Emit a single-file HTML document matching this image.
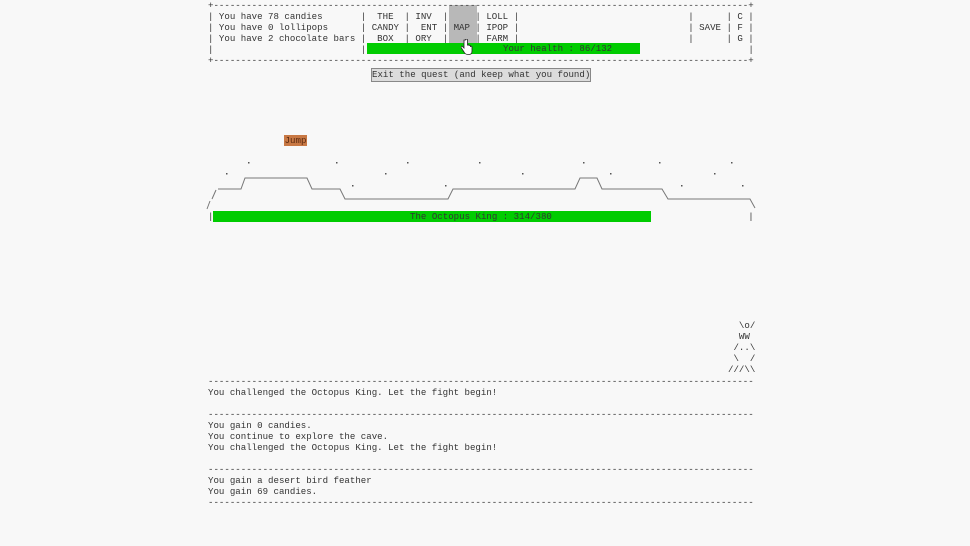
<!DOCTYPE html>
<html><head><meta charset="utf-8"><style>
body{margin:0;background:#f8f8f8;width:970px;height:546px;overflow:hidden;position:relative;color:#333}
.p{position:absolute;margin:0;font-family:"Liberation Mono",monospace;font-size:9.1px;line-height:11px;white-space:pre}
.bar{position:absolute;background:#00cc00;color:#333;font-family:"Liberation Mono",monospace;font-size:9.1px;line-height:11px;white-space:pre;box-sizing:border-box}
</style></head><body>
<div style="position:absolute;left:449px;top:5px;width:28px;height:38px;background:#b8b8b8"></div>
<pre class="p" style="left:208px;top:0">+--------------------------------------------------------------------------------------------------+
| You have 78 candies       |  THE  | INV  |     | LOLL |<span>          </span><span>          </span><span>          </span> |      | C |
| You have 0 lollipops      | CANDY |  ENT | MAP | IPOP |<span>          </span><span>          </span><span>          </span> | SAVE | F |
| You have 2 chocolate bars |  BOX  | ORY  |     | FARM |<span>          </span><span>          </span><span>          </span> |      | G |
|                           |<span>          </span><span>          </span><span>          </span><span>          </span><span>          </span><span>          </span><span>          </span>|
+--------------------------------------------------------------------------------------------------+</pre>
<div class="bar" style="left:367px;top:43px;width:273px;height:11px;padding-left:136px">Your health : 86/132</div>
<svg style="position:absolute;left:461px;top:39px" width="12" height="16" viewBox="0 0 12 16"><path d="M3 1v8l-1.5-1.5c-1-.8-2 .2-1.3 1.2L3 13c1 2 2 2.5 4 2.5h1c2 0 3-1.5 3-3.5V8c0-1-1.5-1-1.5 0V7c0-1-1.5-1-1.5 0V6.5c0-1-1.5-1-1.5 0V1c0-1.2-2-1.2-2 0z" fill="#fff" stroke="#222" stroke-width="0.8"/></svg>
<pre class="p" style="left:371px;top:68px;background:#dcdcdc;border:1px solid #888;line-height:12px">Exit the quest (and keep what you found)</pre>
<pre class="p" style="left:284px;top:135px;width:23px;height:11px;background:#c87844;border:0;color:#5a2a10;text-align:center">Jump</pre>
<svg style="position:absolute;left:0;top:0" width="970" height="546">
<g stroke="#777" stroke-width="1" fill="none">
<polyline points="218,189 241,189 245,178 307,178 312,189 340,189 345,199 448,199 453,189 575,189 580,178 597,178 602,189 662,189 668,199 750,199 755,208"/>
<line x1="216" y1="190" x2="212" y2="199"/>
<line x1="210" y1="201" x2="207" y2="209"/>
</g>
<g fill="#555">
<rect x="248" y="162" width="1.5" height="1.5"/><rect x="336" y="162" width="1.5" height="1.5"/><rect x="407" y="162" width="1.5" height="1.5"/><rect x="479" y="162" width="1.5" height="1.5"/><rect x="583" y="162" width="1.5" height="1.5"/><rect x="659" y="162" width="1.5" height="1.5"/><rect x="731" y="162" width="1.5" height="1.5"/>
<rect x="226" y="173" width="1.5" height="1.5"/><rect x="385" y="173" width="1.5" height="1.5"/><rect x="522" y="173" width="1.5" height="1.5"/><rect x="610" y="173" width="1.5" height="1.5"/><rect x="714" y="173" width="1.5" height="1.5"/>
<rect x="352" y="185" width="1.5" height="1.5"/><rect x="445" y="185" width="1.5" height="1.5"/><rect x="681" y="185" width="1.5" height="1.5"/><rect x="742" y="185" width="1.5" height="1.5"/>
</g>
</svg>
<pre class="p" style="left:208px;top:211px">|                                                                                                  |</pre>
<div class="bar" style="left:213px;top:211px;width:438px;height:11px;padding-left:197px">The Octopus King : 314/380</div>
<pre class="p" style="left:728px;top:320px;text-align:right">  \o/
  WW 
 /..\
 \  /
///\\</pre>
<pre class="p" style="left:208px;top:376px">----------------------------------------------------------------------------------------------------
You challenged the Octopus King. Let the fight begin!

----------------------------------------------------------------------------------------------------
You gain 0 candies.
You continue to explore the cave.
You challenged the Octopus King. Let the fight begin!

----------------------------------------------------------------------------------------------------
You gain a desert bird feather
You gain 69 candies.
----------------------------------------------------------------------------------------------------</pre>
</body></html>
